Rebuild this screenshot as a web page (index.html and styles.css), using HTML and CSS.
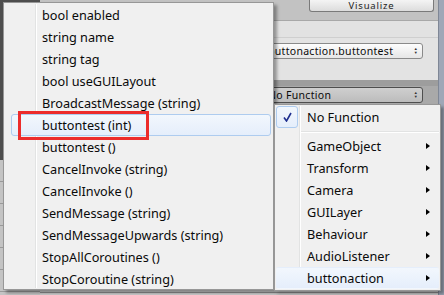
FILE: index.html
```html
<!DOCTYPE html>
<html>
<head>
<meta charset="utf-8">
<link rel="stylesheet" href="styles.css">
</head>
<body>
<div class="screen">
  <div class="backdrop">
    <div class="left-strip">
      <div class="strip-dark"></div>
      <div class="strip-light"></div>
    </div>
    <div class="inspector">
      <div class="insp-main">
        <div class="row-top">
          <div class="btn-visualize">Visualize</div>
        </div>
        <div class="row-band"></div>
        <div class="row-target">
          <div class="dropdown">
            <span>buttonaction.buttontest</span>
            <span class="updown">&#9650;<br>&#9660;</span>
          </div>
        </div>
        <div class="row-sep"></div>
        <div class="row-func">
          <div class="dropdown dark">
            <span>No Function</span>
            <span class="updown">&#9650;<br>&#9660;</span>
          </div>
        </div>
        <div class="row-rest"></div>
      </div>
      <div class="insp-scroll"></div>
    </div>
  </div>

  <div class="menu menu-left">
    <div class="gutter"></div>
    <div class="item">bool enabled</div>
    <div class="item">string name</div>
    <div class="item">string tag</div>
    <div class="item">bool useGUILayout</div>
    <div class="item">BroadcastMessage (string)</div>
    <div class="item hot">buttontest (int)</div>
    <div class="item">buttontest ()</div>
    <div class="item">CancelInvoke (string)</div>
    <div class="item">CancelInvoke ()</div>
    <div class="item">SendMessage (string)</div>
    <div class="item">SendMessageUpwards (string)</div>
    <div class="item">StopAllCoroutines ()</div>
    <div class="item">StopCoroutine (string)</div>
  </div>
  <div class="redbox"></div>

  <div class="menu menu-right">
    <div class="gutter"></div>
    <div class="item checked">
      <span class="checkbox"><svg width="9" height="10" viewBox="0 0 9 10"><path d="M1 5.5 L3.5 9 L8 1" fill="none" stroke="#1f2f8f" stroke-width="1.6"/></svg></span>
      No Function
    </div>
    <div class="separator"></div>
    <div class="item sub">GameObject<span class="arrow"></span></div>
    <div class="item sub">Transform<span class="arrow"></span></div>
    <div class="item sub">Camera<span class="arrow"></span></div>
    <div class="item sub">GUILayer<span class="arrow"></span></div>
    <div class="item sub">Behaviour<span class="arrow"></span></div>
    <div class="item sub">AudioListener<span class="arrow"></span></div>
    <div class="item sub hot">buttonaction<span class="arrow"></span></div>
  </div>
</div>
</body>
</html>
```

FILE: styles.css
```css
* { box-sizing: border-box; }
html, body { margin: 0; padding: 0; }
body {
  width: 444px;
  height: 295px;
  overflow: hidden;
  font-family: "Noto Sans", "Open Sans", sans-serif;
  font-size: 12.7px;
  color: #0a0a0a;
}
.screen {
  position: relative;
  width: 444px;
  height: 295px;
  overflow: hidden;
}
.backdrop {
  display: flex;
  width: 444px;
  height: 295px;
}
.left-strip {
  width: 40px;
  display: flex;
  flex-direction: column;
}
.strip-dark { height: 160px; background: #4e4e4e; }
.strip-light {
  flex: 1;
  background: #c4c4c4;
  background-image: repeating-linear-gradient(#c4c4c4 0 21px, #9a9a9a 21px 22px);
}
.inspector {
  flex: 1;
  display: flex;
}
.insp-main {
  flex: 1;
  display: flex;
  flex-direction: column;
  background: #c2c2c2;
}
.row-top {
  height: 20px;
  display: flex;
  justify-content: flex-end;
  padding-right: 4px;
}
.btn-visualize {
  width: 125px;
  height: 12px;
  border: 1px solid #7a7a7a;
  border-top: none;
  border-radius: 0 0 3px 3px;
  background: linear-gradient(#f4f4f4, #dcdcdc);
  font-size: 9.5px;
  line-height: 12px;
  text-align: center;
  letter-spacing: 0.8px;
  color: #222;
}
.row-band {
  height: 18px;
  background: #e2e2e2;
  border-top: 1px solid #a8a8a8;
  border-bottom: 1px solid #cfcfcf;
}
.row-target {
  height: 42px;
  background: #e3e3e3;
  padding: 5px 15px 0 0;
  display: flex;
  justify-content: flex-end;
}
.dropdown {
  width: 160px;
  height: 16px;
  border: 1px solid #8a8a8a;
  border-radius: 3px;
  background: linear-gradient(#fdfdfd, #e6e6e6);
  display: flex;
  justify-content: space-between;
  align-items: center;
  padding: 0 4px 0 4px;
  font-size: 10.5px;
  letter-spacing: 0.3px;
}
.dropdown.dark {
  background: linear-gradient(#cfcfcf, #bcbcbc);
  border-color: #4e4e4e;
}
.updown {
  font-size: 4px;
  line-height: 4px;
  text-align: center;
  color: #333;
}
.row-sep {
  height: 6px;
  background: #9d9d9d;
}
.row-func {
  height: 18px;
  background: #a9a9a9;
  display: flex;
  justify-content: flex-end;
  padding: 1px 15px 0 0;
}
.row-rest {
  flex: 1;
  background: #c9c9c9;
  background-image: repeating-linear-gradient(#cacaca 0 20px, #8e8e8e 20px 21px);
}
.insp-scroll {
  width: 6px;
  background: #9fa7b7;
  border-left: 1px solid #7f8796;
}

/* menus */
.menu {
  position: absolute;
  background: #f0f0f0;
  border: 1px solid #979797;
  box-shadow: 3px 3px 3px rgba(0,0,0,0.35);
  padding: 1px;
}
.gutter {
  position: absolute;
  top: 1px;
  bottom: 1px;
  width: 2px;
  border-left: 1px solid #e2e3e3;
  border-right: 1px solid #ffffff;
}
.menu-left {
  left: 3px;
  top: 2px;
  width: 271px;
  height: 288px;
}
.menu-left .gutter { left: 31px; }
.menu-left .item {
  height: 22px;
  line-height: 21px;
  padding-left: 30px;
  margin-left: 6px;
  margin-right: 1px;
  white-space: nowrap;
  position: relative;
  border: 1px solid transparent;
  border-radius: 3px;
}
.item.hot {
  border: 1px solid #aeccef;
  background: linear-gradient(#f2f7fd, #e5eefb);
}
.redbox {
  position: absolute;
  left: 18px;
  top: 111px;
  width: 131px;
  height: 29px;
  border: 3px solid #ec2c2c;
}
.menu-right {
  left: 274px;
  top: 104px;
  width: 167px;
}
.menu-right .gutter { left: 24px; }
.menu-right .item {
  height: 22px;
  line-height: 21px;
  padding-left: 30px;
  position: relative;
  white-space: nowrap;
  border: 1px solid transparent;
  border-radius: 3px;
}
.checkbox {
  position: absolute;
  left: -1px;
  top: -1px;
  width: 22px;
  height: 22px;
  border: 1px solid #aeccef;
  border-radius: 3px;
  background: linear-gradient(#f2f7fd, #e5eefb);
  display: flex;
  align-items: center;
  justify-content: center;
}
.separator {
  height: 7px;
  margin-left: 24px;
  background: linear-gradient(transparent 0 3px, #e2e3e3 3px 4px, #ffffff 4px 5px, transparent 5px);
}
.arrow {
  position: absolute;
  right: 8px;
  top: 7px;
  width: 0;
  height: 0;
  border-top: 3.5px solid transparent;
  border-bottom: 3.5px solid transparent;
  border-left: 4px solid #000;
}
```
